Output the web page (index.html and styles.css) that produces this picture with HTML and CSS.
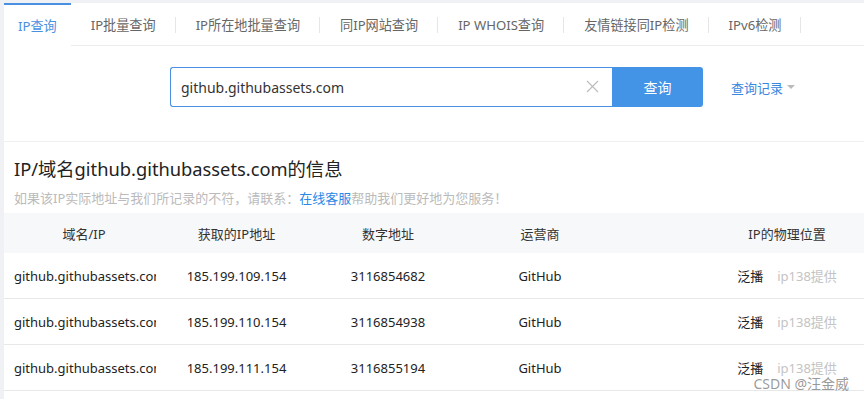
FILE: index.html
```html
<!DOCTYPE html>
<html lang="zh-CN">
<head>
  <meta charset="UTF-8" />
  <title>IP查询</title>
  <link rel="stylesheet" href="styles.css">
</head>
<body>
  <div class="page">
    <div class="tabs">
      <a class="tab active">IP查询</a>
      <a class="tab">IP批量查询</a>
      <a class="tab">IP所在地批量查询</a>
      <a class="tab">同IP网站查询</a>
      <a class="tab">IP WHOIS查询</a>
      <a class="tab">友情链接同IP检测</a>
      <a class="tab">IPv6检测</a>
      <div class="tab-rest"></div>
    </div>

    <div class="search">
      <div class="search-box">
        <input type="text" class="search-input" value="github.githubassets.com" />
        <span class="clear">
          <svg width="13" height="13" viewBox="0 0 13 13"><path d="M1 1L12 12M12 1L1 12" stroke="#bdbdbd" stroke-width="1.2" fill="none"/></svg>
        </span>
      </div>
      <button class="search-btn">查询</button>
      <a class="history">查询记录 <span class="caret"></span></a>
    </div>

    <div class="result">
      <h2 class="result-title">IP/域名github.githubassets.com的信息</h2>
      <p class="result-tip">如果该IP实际地址与我们所记录的不符，请联系：<a class="link">在线客服</a>帮助我们更好地为您服务！</p>

      <table class="ip-table">
        <colgroup>
          <col class="c1"><col class="c2"><col class="c3"><col class="c4"><col class="c5">
        </colgroup>
        <thead>
          <tr>
            <th>域名/IP</th>
            <th>获取的IP地址</th>
            <th>数字地址</th>
            <th>运营商</th>
            <th>IP的物理位置</th>
          </tr>
        </thead>
        <tbody>
          <tr>
            <td class="domain"><div>github.githubassets.com</div></td>
            <td>185.199.109.154</td>
            <td>3116854682</td>
            <td>GitHub</td>
            <td>泛播<span class="source">ip138提供</span></td>
          </tr>
          <tr>
            <td class="domain"><div>github.githubassets.com</div></td>
            <td>185.199.110.154</td>
            <td>3116854938</td>
            <td>GitHub</td>
            <td>泛播<span class="source">ip138提供</span></td>
          </tr>
          <tr>
            <td class="domain"><div>github.githubassets.com</div></td>
            <td>185.199.111.154</td>
            <td>3116855194</td>
            <td>GitHub</td>
            <td>泛播<span class="source">ip138提供</span></td>
          </tr>
        </tbody>
      </table>
    </div>
  </div>

  <div class="watermark">CSDN @汪金威</div>
</body>
</html>
```

FILE: styles.css
```css
body {
  margin: 0;
  padding: 3px 0 0 4px;
  background: #f0f1f4;
  font-family: "Noto Sans", "Noto Sans CJK SC", sans-serif;
  color: #333;
  overflow: hidden;
}

.page {
  width: 960px;
  background: #fff;
  min-height: 420px;
}

.tabs {
  display: flex;
  height: 43px;
}

.tab {
  display: flex;
  align-items: center;
  padding: 0 20px;
  font-size: 13.15px;
  color: #666;
  position: relative;
  border-bottom: 1px solid #ececec;
}

.tab::after {
  content: "";
  position: absolute;
  right: 0;
  top: 14px;
  height: 16px;
  width: 1px;
  background: #e6e6e6;
}

.tab.active {
  padding: 0 14px;
  color: #4a90e2;
  border-top: 2px solid #4a90e2;
  border-bottom-color: #fff;
}

.tab.active::after {
  display: none;
}

.tab-rest {
  flex: 1;
  border-bottom: 1px solid #ececec;
}

.search {
  display: flex;
  align-items: center;
  padding: 21px 0 34px 166px;
  border-bottom: 1px solid #f0f0f0;
}

.search-box {
  position: relative;
  width: 442px;
  height: 40px;
}

.search-input {
  box-sizing: border-box;
  width: 100%;
  height: 100%;
  border: 1px solid #4a90e2;
  border-right: none;
  border-radius: 3px 0 0 3px;
  padding: 0 40px 0 10px;
  font-family: inherit;
  font-size: 14px;
  color: #333;
  outline: none;
}

.clear {
  position: absolute;
  right: 13px;
  top: 13px;
  line-height: 0;
}

.search-btn {
  width: 91px;
  height: 40px;
  border: none;
  border-radius: 0 3px 3px 0;
  background: #4393e6;
  color: #fff;
  font-family: inherit;
  font-size: 14px;
}

.history {
  margin-left: 28px;
  font-size: 13px;
  color: #3a87de;
  display: flex;
  align-items: center;
  gap: 4px;
}

.caret {
  width: 0;
  height: 0;
  border-left: 4px solid transparent;
  border-right: 4px solid transparent;
  border-top: 4px solid #bbb;
}

.result {
  padding-top: 13px;
}

.result-title {
  margin: 0 0 0 10px;
  font-size: 18.3px;
  font-weight: normal;
  color: #222;
  line-height: 28px;
}

.result-tip {
  margin: 4px 0 0 10px;
  font-size: 13px;
  color: #bbb;
  line-height: 22px;
}

.link {
  color: #2a88e8;
}

.ip-table {
  margin-top: 4px;
  border-collapse: collapse;
  table-layout: fixed;
  width: 957px;
  font-size: 13px;
}

.c1 { width: 160px; }
.c2 { width: 145px; }
.c3 { width: 158px; }
.c4 { width: 146px; }
.c5 { width: 348px; }

.ip-table th {
  background: #f7f8fa;
  font-weight: normal;
  height: 40px;
  padding: 0;
  color: #333;
}

.ip-table td {
  height: 45px;
  padding: 0;
  text-align: center;
  border-bottom: 1px solid #e8e8e8;
  color: #222;
}

.ip-table td.domain {
  text-align: left;
  padding: 0 8px 0 10px;
}

.domain div {
  white-space: nowrap;
  overflow: hidden;
}

.source {
  margin-left: 14px;
  color: #c4c4c4;
}

.watermark {
  position: absolute;
  right: 15px;
  top: 373px;
  font-size: 14px;
  color: rgba(120, 120, 120, 0.75);
}
```
